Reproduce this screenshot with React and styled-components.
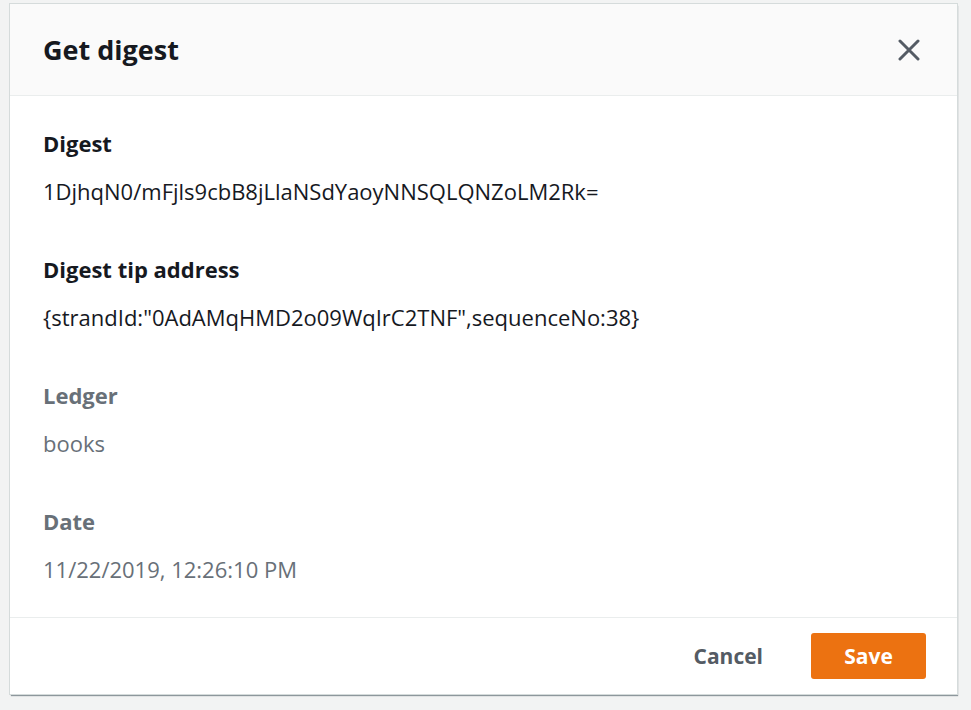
import React from "react";
import styled, { createGlobalStyle } from "styled-components";

const GlobalStyle = createGlobalStyle`
  html, body {
    margin: 0;
    padding: 0;
    background: #f2f3f3;
    font-family: "Open Sans", "Noto Sans", sans-serif;
  }
`;

const Page = styled.div`
  width: 971px;
  height: 710px;
  padding: 4px 0 0 10px;
  box-sizing: border-box;
`;

const Modal = styled.div`
  width: 947px;
  height: 690px;
  background: #ffffff;
  display: flex;
  flex-direction: column;
  box-shadow: 0 0 0 1px #d5dbdb, 1px 2px 1px 0 #8d979c;
`;

const Header = styled.div`
  height: 92px;
  box-sizing: border-box;
  background: #fafafa;
  border-bottom: 1px solid #eaeded;
  display: flex;
  align-items: center;
  justify-content: space-between;
  padding: 0 36px 0 33px;
`;

const Title = styled.h2`
  margin: 0;
  font-size: 27px;
  font-weight: 700;
  color: #16191f;
`;

const CloseButton = styled.button`
  border: none;
  background: none;
  padding: 0;
  width: 24px;
  height: 24px;
  display: flex;
  align-items: center;
  justify-content: center;
  cursor: pointer;
`;

const Body = styled.div`
  flex: 1;
  padding: 31px 33px 0;
  display: flex;
  flex-direction: column;
  gap: 46px;
`;

const Field = styled.div`
  display: flex;
  flex-direction: column;
  gap: 16px;
`;

const Label = styled.div`
  font-size: 22px;
  font-weight: 700;
  line-height: 32px;
  color: ${(p) => (p.muted ? "#687078" : "#16191f")};
`;

const Value = styled.div`
  font-size: 22px;
  line-height: 32px;
  color: ${(p) => (p.muted ? "#687078" : "#16191f")};
`;

const Footer = styled.div`
  height: 76px;
  border-top: 1px solid #eaeded;
  display: flex;
  align-items: center;
  justify-content: flex-end;
  gap: 48px;
  padding: 0 31px 0 0;
`;

const LinkButton = styled.button`
  border: none;
  background: none;
  padding: 0;
  font-family: inherit;
  font-size: 21px;
  font-weight: 700;
  color: #545b64;
  cursor: pointer;
`;

const PrimaryButton = styled.button`
  width: 115px;
  height: 46px;
  border: none;
  border-radius: 3px;
  background: #ec7211;
  color: #ffffff;
  font-family: inherit;
  font-size: 21px;
  font-weight: 700;
  cursor: pointer;
`;

const fields = [
  { label: "Digest", value: "1DjhqN0/mFjls9cbB8jLlaNSdYaoyNNSQLQNZoLM2Rk=" },
  {
    label: "Digest tip address",
    value: '{strandId:"0AdAMqHMD2o09WqIrC2TNF",sequenceNo:38}',
  },
  { label: "Ledger", value: "books", muted: true },
  { label: "Date", value: "11/22/2019, 12:26:10 PM", muted: true },
];

export default function App() {
  return (
    <>
      <GlobalStyle />
      <Page>
        <Modal>
          <Header>
            <Title>Get digest</Title>
            <CloseButton aria-label="Close">
              <svg width="22" height="22" viewBox="0 0 22 22">
                <path
                  d="M2 2 L20 20 M20 2 L2 20"
                  stroke="#545b64"
                  strokeWidth="3"
                  strokeLinecap="round"
                />
              </svg>
            </CloseButton>
          </Header>
          <Body>
            {fields.map((f) => (
              <Field key={f.label}>
                <Label muted={f.muted}>{f.label}</Label>
                <Value muted={f.muted}>{f.value}</Value>
              </Field>
            ))}
          </Body>
          <Footer>
            <LinkButton>Cancel</LinkButton>
            <PrimaryButton>Save</PrimaryButton>
          </Footer>
        </Modal>
      </Page>
    </>
  );
}
